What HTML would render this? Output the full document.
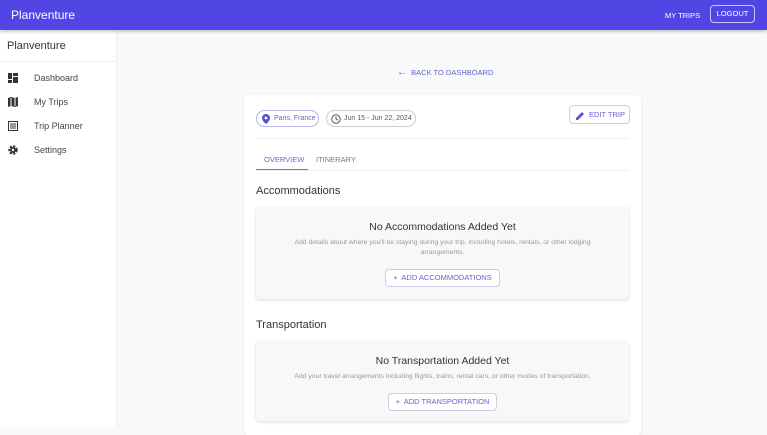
<!DOCTYPE html>
<html><head><style>
*{box-sizing:border-box;margin:0;padding:0}
body{width:767px;height:427px;overflow:hidden;font-family:"Liberation Sans",sans-serif;background:#f8f9fa;position:relative;color:#333}
.hdr{position:absolute;left:0;top:0;width:767px;height:30px;background:#5146e4;box-shadow:0 2px 3px rgba(0,0,0,.2);z-index:2}
.hdr .t{position:absolute;left:11px;top:8px;color:#fff;font-size:12px}
.hdr .m{position:absolute;left:665px;top:11px;color:#fff;font-size:7.5px}
.hdr .lo{position:absolute;left:710px;top:5px;width:45px;height:18px;border:1px solid rgba(255,255,255,.7);border-radius:4px;color:#fff;font-size:7.5px;text-align:center;line-height:16px}
.side{position:absolute;left:0;top:30px;width:117px;height:397px;background:#fff;border-right:1px solid #eee}
.side .t{position:absolute;left:7px;top:10px;font-size:11px;color:#333}
.side .sep{position:absolute;left:0;top:31px;width:117px;border-top:1px solid #eee}
.it{position:absolute;left:8px;font-size:9px;color:#444}
.it svg{position:absolute;left:0;top:0}
.it span{position:absolute;left:26px;top:0;white-space:nowrap}
.back{position:absolute;left:397px;top:67px;font-size:7.5px;color:#6a62c9}
.card{position:absolute;left:244px;top:95px;width:397px;height:340px;background:#fff;border-radius:4px;box-shadow:0 1px 3px rgba(0,0,0,.08)}
.chip{position:absolute;top:15px;height:17px;border:1px solid #ccc;border-radius:9px;font-size:7px;line-height:15px;color:#555;padding-left:17px}
.edit{position:absolute;left:325px;top:10px;width:61px;height:19px;border:1px solid #cfcde6;border-radius:4px;font-size:7.5px;color:#6a62c9;line-height:17px;padding-left:19px}
.hr{position:absolute;left:12px;width:373px;border-top:1px solid #eee}
.tab{position:absolute;top:60px;font-size:7.5px}
.h{position:absolute;left:12px;font-size:11px;color:#333}
.panel{position:absolute;left:12px;width:373px;background:#f8f8f8;border-radius:4px;box-shadow:0 1px 3px rgba(0,0,0,.15);text-align:center}
.panel .a{font-size:10.5px;color:#333;margin-top:14px}
.panel .b{font-size:6.8px;color:#999;line-height:10px;margin:5px 20px 0}
.btn{display:inline-block;border:1px solid #cfcde6;border-radius:4px;height:18px;font-size:7.5px;color:#6a62c9;line-height:16px;padding:0 7px;background:#fff}
</style></head><body>
<div class="hdr"><div class="t">Planventure</div><div class="m">MY TRIPS</div><div class="lo">LOGOUT</div></div>
<div class="side"><div class="t">Planventure</div><div class="sep"></div>
<div class="it" style="top:43px"><svg width="10" height="10"><rect x="0" y="0" width="4" height="6" fill="#333"/><rect x="5" y="0" width="5" height="3" fill="#333"/><rect x="5" y="4" width="5" height="6" fill="#333"/><rect x="0" y="7" width="4" height="3" fill="#333"/></svg><span>Dashboard</span></div>
<div class="it" style="top:67px"><svg width="10" height="10"><path d="M0 1L3 0 7 1 10 0V9L7 10 3 9 0 10Z" fill="#333"/><path d="M3 1V9M7 1V9" stroke="#fff" stroke-width="1"/></svg><span>My Trips</span></div>
<div class="it" style="top:91px"><svg width="10" height="10"><rect x=".5" y=".5" width="9" height="9" fill="none" stroke="#333"/><path d="M2 3h6M2 5h6M2 7h6" stroke="#333"/></svg><span>Trip Planner</span></div>
<div class="it" style="top:115px"><svg width="10" height="10"><circle cx="5" cy="5" r="3.5" fill="none" stroke="#333" stroke-width="2.5" stroke-dasharray="2 1.3"/><circle cx="5" cy="5" r="3" fill="#333"/><circle cx="5" cy="5" r="1.2" fill="#fff"/></svg><span>Settings</span></div>
</div>
<div class="back"><span style="font-size:10px">&#8592;</span>&nbsp; BACK TO DASHBOARD</div>
<div class="card">
<div class="chip" style="left:12px;width:63px;border-color:#b9b4e3;color:#6a62c9"><svg style="position:absolute;left:5px;top:3px" width="8" height="10"><path d="M4 0C2 0 0 1.6 0 4c0 3 4 6 4 6s4-3 4-6C8 1.6 6 0 4 0z" fill="#5a50d6"/><circle cx="4" cy="4" r="1.4" fill="#fff"/></svg>Paris, France</div>
<div class="chip" style="left:82px;width:90px"><svg style="position:absolute;left:4px;top:3px" width="10" height="10"><circle cx="5" cy="5" r="4.2" fill="none" stroke="#555" stroke-width="1"/><path d="M5 2.5V5l2 1.2" stroke="#555" fill="none"/></svg>Jun 15 - Jun 22, 2024</div>
<div class="edit"><svg style="position:absolute;left:6px;top:5px" width="9" height="9"><path d="M0 9V7L6 1l2 2-6 6z" fill="#5a50d6"/></svg>EDIT TRIP</div>
<div class="hr" style="top:43px"></div>
<div class="tab" style="left:20px;color:#6a62c9">OVERVIEW</div>
<div class="tab" style="left:72px;color:#777">ITINERARY</div>
<div style="position:absolute;left:12px;top:74px;width:52px;border-top:2px solid #7a72c9"></div>
<div class="hr" style="top:75px"></div>
<div class="h" style="top:90px">Accommodations</div>
<div class="panel" style="top:112px;height:92px"><div class="a">No Accommodations Added Yet</div><div class="b">Add details about where you'll be staying during your trip, including hotels, rentals, or other lodging arrangements.</div><div style="margin-top:9px"><span class="btn">+&nbsp; ADD ACCOMMODATIONS</span></div></div>
<div class="h" style="top:224px">Transportation</div>
<div class="panel" style="top:246px;height:80px"><div class="a">No Transportation Added Yet</div><div class="b">Add your travel arrangements including flights, trains, rental cars, or other modes of transportation.</div><div style="margin-top:9px"><span class="btn">+&nbsp; ADD TRANSPORTATION</span></div></div>
</div>
</body></html>
